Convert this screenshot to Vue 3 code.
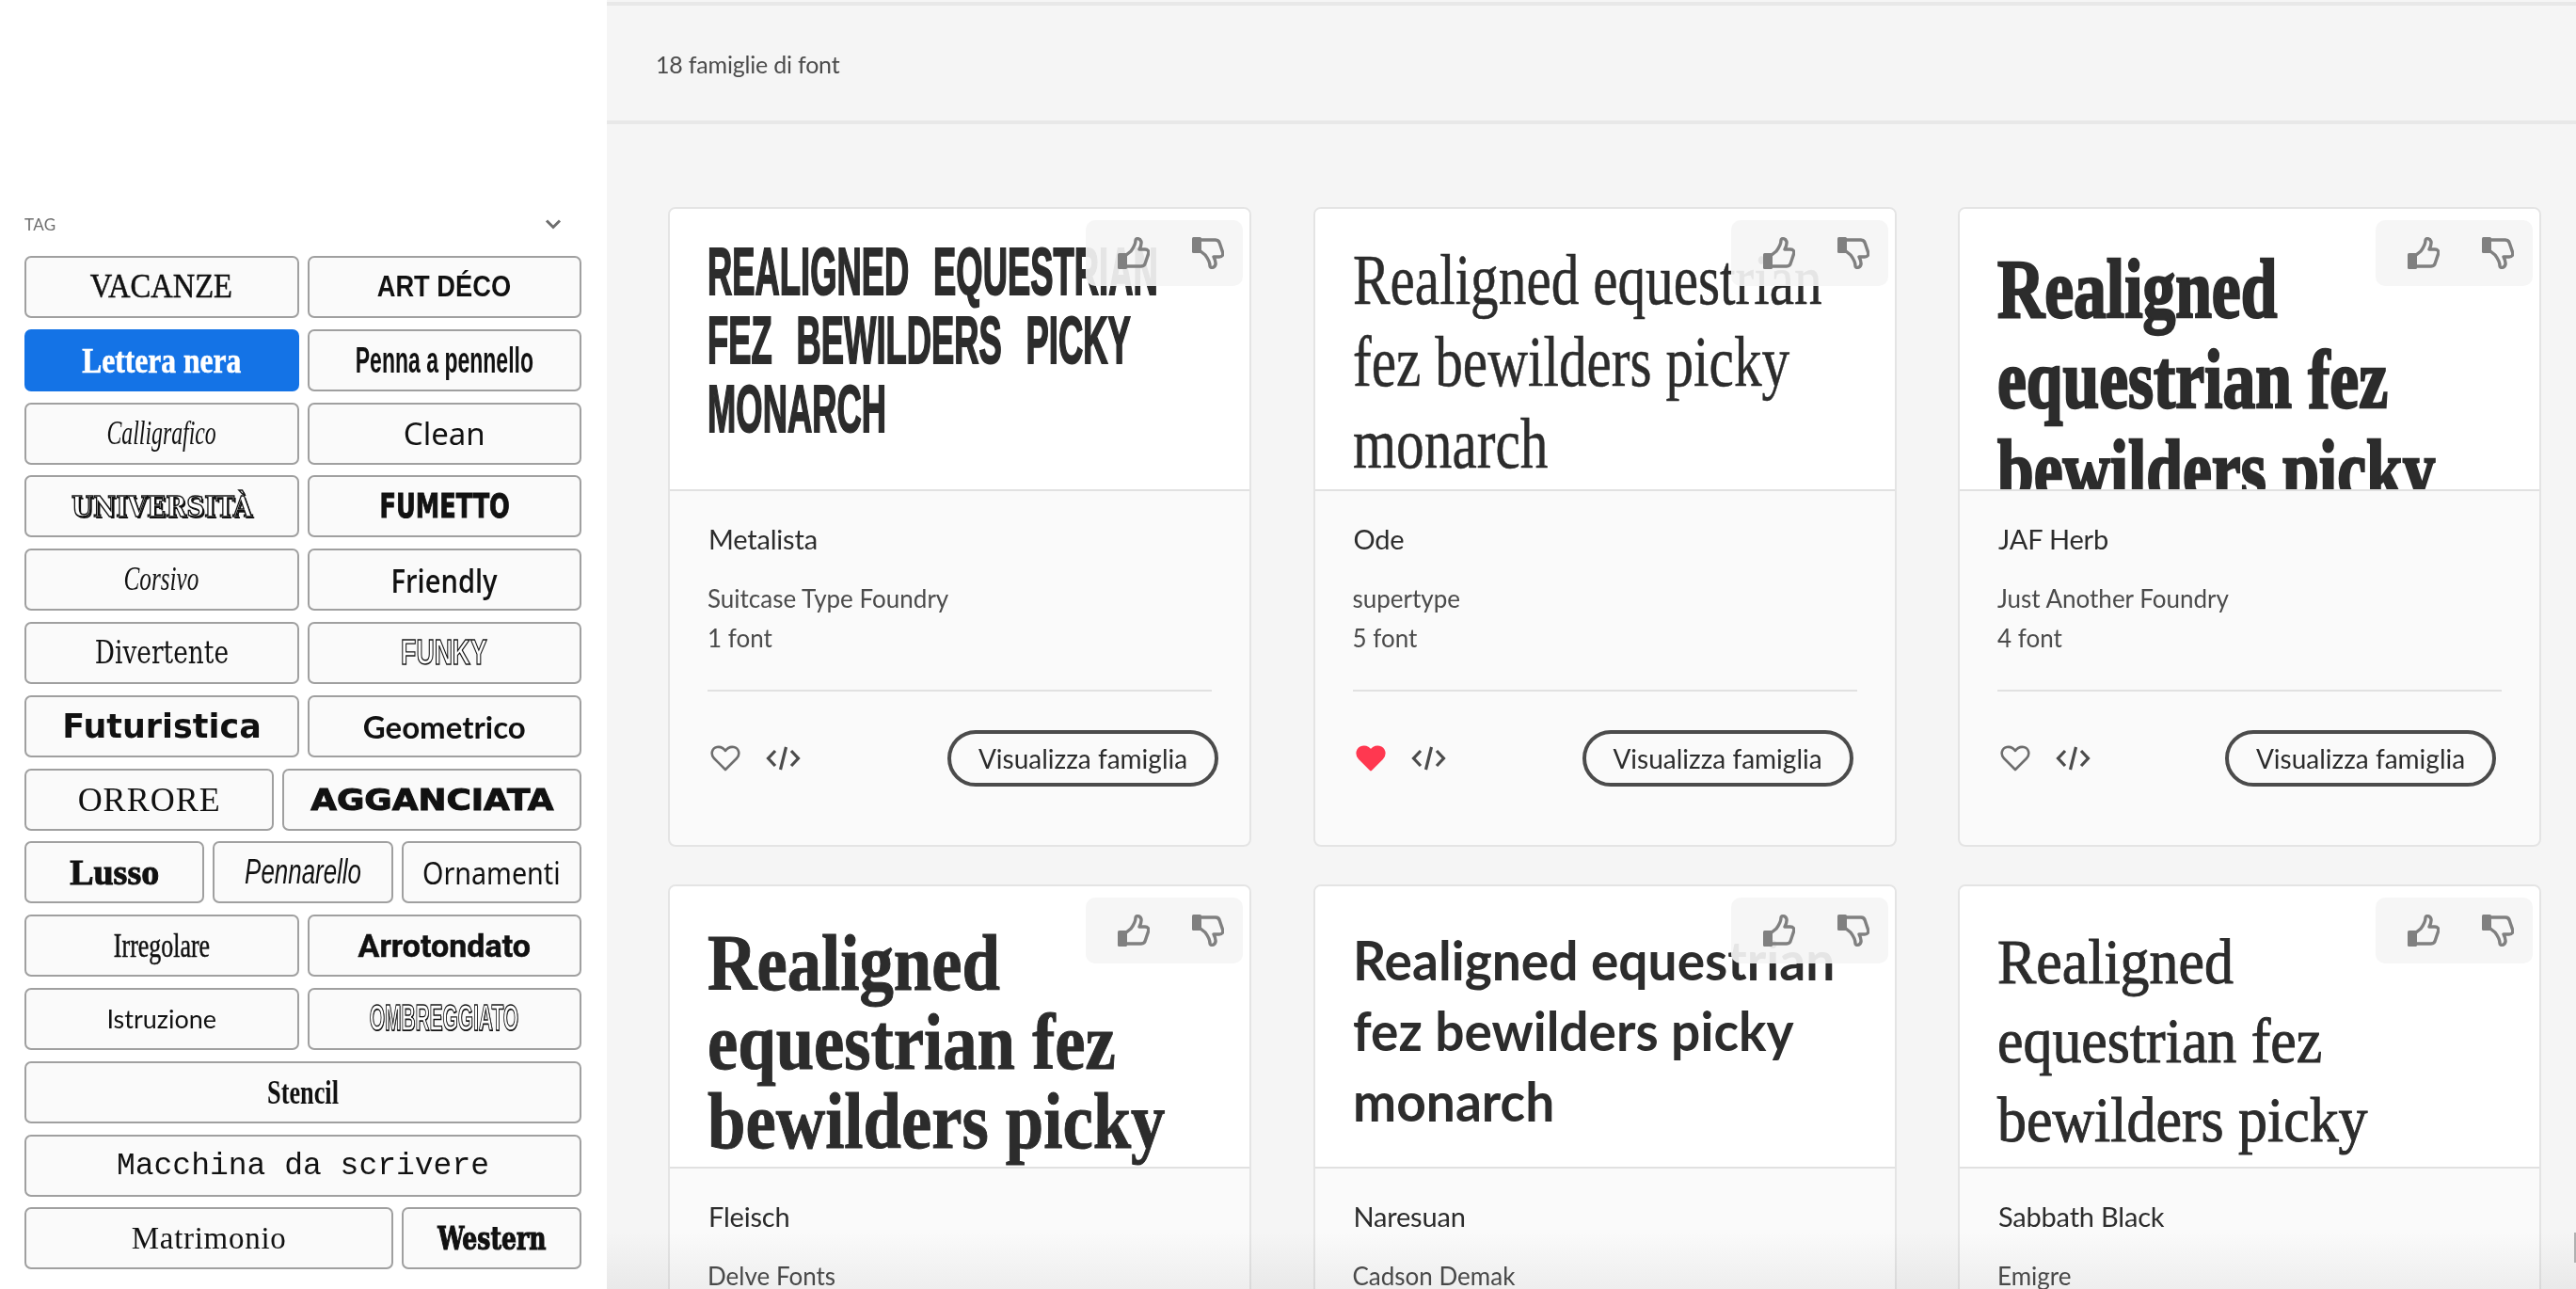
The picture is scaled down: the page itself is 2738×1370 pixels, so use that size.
<script setup>
const tagRows = [
  [{ label: 'VACANZE', cls: 'f-vacanze' }, { label: 'ART DÉCO', cls: 'f-deco' }],
  [{ label: 'Lettera nera', cls: 'f-lettera', active: true }, { label: 'Penna a pennello', cls: 'f-penna' }],
  [{ label: 'Calligrafico', cls: 'f-calli' }, { label: 'Clean', cls: 'f-clean' }],
  [{ label: 'UNIVERSITÀ', cls: 'f-uni' }, { label: 'FUMETTO', cls: 'f-fumetto' }],
  [{ label: 'Corsivo', cls: 'f-corsivo' }, { label: 'Friendly', cls: 'f-friendly' }],
  [{ label: 'Divertente', cls: 'f-divert' }, { label: 'FUNKY', cls: 'f-funky' }],
  [{ label: 'Futuristica', cls: 'f-futur' }, { label: 'Geometrico', cls: 'f-geo' }],
  [{ label: 'ORRORE', cls: 'f-orrore', w: 264 }, { label: 'AGGANCIATA', cls: 'f-agg', w: 317 }],
  [{ label: 'Lusso', cls: 'f-lusso' }, { label: 'Pennarello', cls: 'f-pennar' }, { label: 'Ornamenti', cls: 'f-orna' }],
  [{ label: 'Irregolare', cls: 'f-irreg' }, { label: 'Arrotondato', cls: 'f-arro' }],
  [{ label: 'Istruzione', cls: 'f-istr' }, { label: 'OMBREGGIATO', cls: 'f-ombre' }],
  [{ label: 'Stencil', cls: 'f-stencil' }],
  [{ label: 'Macchina da scrivere', cls: 'f-macchina' }],
  [{ label: 'Matrimonio', cls: 'f-matri', w: 393 }, { label: 'Western', cls: 'f-western', w: 189 }],
]

const families = [
  { name: 'Metalista', foundry: 'Suitcase Type Foundry', count: '1 font', cls: 'p-metalista', lines: ['Realigned equestrian', 'fez bewilders picky', 'monarch'] },
  { name: 'Ode', foundry: 'supertype', count: '5 font', cls: 'p-ode', liked: true, lines: ['Realigned equestrian', 'fez bewilders picky', 'monarch'] },
  { name: 'JAF Herb', foundry: 'Just Another Foundry', count: '4 font', cls: 'p-herb', lines: ['Realigned', 'equestrian fez', 'bewilders picky'] },
  { name: 'Fleisch', foundry: 'Delve Fonts', count: '2 font', cls: 'p-fleisch', lines: ['Realigned', 'equestrian fez', 'bewilders picky'] },
  { name: 'Naresuan', foundry: 'Cadson Demak', count: '1 font', cls: 'p-naresuan', lines: ['Realigned equestrian', 'fez bewilders picky', 'monarch'] },
  { name: 'Sabbath Black', foundry: 'Emigre', count: '1 font', cls: 'p-sabbath', lines: ['Realigned', 'equestrian fez', 'bewilders picky'] },
]
</script>

<template>
  <div class="page">
    <aside class="sidebar">
      <div class="tag-head">
        <span>TAG</span>
        <svg class="chevron" viewBox="0 0 18 12" width="18" height="12">
          <path d="M2 2.5 L9 9.5 L16 2.5" fill="none" stroke="#6e6e6e" stroke-width="3" />
        </svg>
      </div>
      <div class="tag-list">
        <div v-for="(row, i) in tagRows" :key="i" class="tag-row">
          <button
            v-for="tag in row"
            :key="tag.label"
            class="tag"
            :class="{ active: tag.active }"
            :style="{ flexGrow: tag.w ?? 1 }"
          >
            <span :class="tag.cls">{{ tag.label }}</span>
          </button>
        </div>
      </div>
    </aside>

    <main class="main">
      <header class="result-bar">18 famiglie di font</header>

      <section class="grid">
        <article v-for="family in families" :key="family.name" class="card">
          <div class="preview" :class="family.cls">
            <div v-for="line in family.lines" :key="line" class="line">{{ line }}</div>
            <div class="votes">
              <svg viewBox="0 0 34 34" width="34" height="34">
                <rect x="0" y="17" width="10" height="17" rx="1.5" fill="#808080" />
                <path d="M9 19 L14 15 C17 11 19 7 19 3.5 C19 0.5 24 1 25 5 C25.500 8 24 11 23 13 L29 13 C32 13 33.500 15 32.500 18 L29.500 27 C29 29.500 27.500 31 25 31 L9 31" fill="none" stroke="#808080" stroke-width="3.4" stroke-linejoin="round" />
              </svg>
              <svg viewBox="0 0 34 34" width="34" height="34">
                <g transform="translate(0 34) scale(1 -1)">
                  <rect x="0" y="17" width="10" height="17" rx="1.5" fill="#808080" />
                  <path d="M9 19 L14 15 C17 11 19 7 19 3.5 C19 0.5 24 1 25 5 C25.500 8 24 11 23 13 L29 13 C32 13 33.500 15 32.500 18 L29.500 27 C29 29.500 27.500 31 25 31 L9 31" fill="none" stroke="#808080" stroke-width="3.4" stroke-linejoin="round" />
                </g>
              </svg>
            </div>
          </div>
          <div class="info">
            <div class="name">{{ family.name }}</div>
            <div class="foundry">{{ family.foundry }}</div>
            <div class="foundry">{{ family.count }}</div>
            <div class="rule"></div>
            <div class="actions">
              <svg class="heart" viewBox="0 0 32 28" width="32" height="28">
                <path
                  d="M16 26 L4 14 C0 10 1.500 3 7 2 C10.500 1.400 14 3 16 6 C18 3 21.500 1.400 25 2 C30.500 3 32 10 28 14 Z"
                  :fill="family.liked ? '#ff3850' : 'none'"
                  :stroke="family.liked ? '#ff3850' : '#6e6e6e'"
                  stroke-width="2.6"
                  stroke-linejoin="round"
                />
              </svg>
              <svg class="code" viewBox="0 0 37 26" width="37" height="26">
                <path d="M10 5 L2.500 13 L10 21 M27 5 L34.500 13 L27 21 M21.500 1 L15.500 25" fill="none" stroke="#4b4b4b" stroke-width="3.2" />
              </svg>
              <button class="view">Visualizza famiglia</button>
            </div>
          </div>
        </article>
      </section>

      <div class="fade"></div>
      <div class="scroll-mark"></div>
    </main>
  </div>
</template>

<style>
html, body { overflow: hidden; background: #fff; }
</style>

<style scoped>
.page {
  display: flex;
  width: 2738px;
  height: 1370px;
  overflow: hidden;
  font-family: Lato, "Open Sans", sans-serif;
}
.sidebar {
  width: 645px;
  flex: none;
  background: #fff;
  box-sizing: border-box;
  padding: 226px 27px 0 26px;
}
.tag-head {
  display: flex;
  justify-content: space-between;
  align-items: center;
  height: 24px;
  padding-right: 21px;
  color: #6e6e6e;
  font-size: 17px;
  letter-spacing: 0.02em;
}
.tag-list {
  display: grid;
  gap: 11.8px;
  margin-top: 22px;
}
.tag-row { display: flex; gap: 9px; }
.tag {
  flex: 1 1 0;
  min-width: 0;
  height: 66px;
  padding: 0;
  box-sizing: border-box;
  display: flex;
  align-items: center;
  justify-content: center;
  background: #fafafa;
  border: 2px solid #a0a0a0;
  border-radius: 7px;
  color: #111;
  white-space: nowrap;
  overflow: hidden;
}
.tag.active { background: #1473e6; border-color: #1473e6; color: #fff; }
.tag span { display: inline-block; }

.f-vacanze { font: 400 35px "Liberation Serif", serif; -webkit-text-stroke: 0.5px #111; transform: scaleX(0.93); }
.f-deco { font: 700 31px "Liberation Sans", sans-serif; transform: scaleX(0.88); }
.f-lettera { font: 700 38px "Liberation Serif", serif; transform: scaleX(0.83); -webkit-text-stroke: 0.6px #fff; }
.f-penna { font: 700 39px "Liberation Sans", sans-serif; transform: scaleX(0.59); }
.f-calli { font: italic 400 35px "Liberation Serif", serif; transform: scaleX(0.68); }
.f-clean { font: 400 33px "Noto Sans", sans-serif; }
.f-uni { font: 700 30px "DejaVu Serif", serif; color: #fff; -webkit-text-stroke: 1.5px #111; text-shadow: 2px 2px 0 #111; transform: scaleX(0.88); }
.f-fumetto { font: 700 35px "DejaVu Sans", sans-serif; -webkit-text-stroke: 1px #111; transform: scaleX(0.73); }
.f-corsivo { font: italic 400 35px "Liberation Serif", serif; transform: scaleX(0.72); }
.f-friendly { font: 600 35px "Open Sans", sans-serif; transform: scaleX(0.83); }
.f-divert { font: 400 33px "DejaVu Serif", serif; transform: scaleX(0.8); }
.f-funky { font: 700 36px "Liberation Sans", sans-serif; color: #fff; -webkit-text-stroke: 1.4px #111; transform: scaleX(0.74); }
.f-futur { font: 700 36px "DejaVu Sans", sans-serif; transform: scaleX(0.97); }
.f-geo { font: 700 33px Lato, sans-serif; }
.f-orrore { font: 400 36px "Liberation Serif", serif; letter-spacing: 1px; }
.f-agg { font: 700 32px "DejaVu Sans", sans-serif; -webkit-text-stroke: 1px #111; transform: scaleX(1.12); }
.f-lusso { font: 700 38px "Liberation Serif", serif; -webkit-text-stroke: 1px #111; }
.f-pennar { font: italic 400 36px "Liberation Sans", sans-serif; transform: scaleX(0.72); }
.f-orna { font: 400 33px "Noto Sans", sans-serif; transform: scaleX(0.87); }
.f-irreg { font: 400 36px "Liberation Serif", serif; -webkit-text-stroke: 0.5px #111; transform: scaleX(0.72); }
.f-arro { font: 700 34px Roboto, sans-serif; -webkit-text-stroke: 0.5px #111; }
.f-istr { font: 400 27px Lato, sans-serif; }
.f-ombre { font: 700 38px "Liberation Sans", sans-serif; color: #fff; -webkit-text-stroke: 1.4px #111; text-shadow: 1px 1px 0 #111; transform: scaleX(0.55); }
.f-stencil { font: 700 36px "Liberation Serif", serif; transform: scaleX(0.73); }
.f-macchina { font: 400 33px "Liberation Mono", monospace; position: relative; top: 1px; }
.f-matri { font: 400 33px "Liberation Serif", serif; letter-spacing: 0.7px; }
.f-western { font: 700 33px "DejaVu Serif", serif; -webkit-text-stroke: 1.2px #111; transform: scaleX(0.76); }

.main {
  position: relative;
  flex: 1;
  min-width: 0;
  background: #f5f5f5;
  padding-top: 2px;
  box-sizing: border-box;
}
.result-bar {
  box-sizing: border-box;
  height: 130px;
  padding: 45px 0 0 52px;
  border-top: 4px solid #e8e8e8;
  border-bottom: 4px solid #e8e8e8;
  font-size: 25px;
  letter-spacing: -0.2px;
  line-height: 34px;
  color: #4b4b4b;
}
.grid {
  display: grid;
  grid-template-columns: repeat(3, 620px);
  column-gap: 65.5px;
  row-gap: 40px;
  margin: 88px 0 0 65px;
}
.card {
  height: 680px;
  box-sizing: border-box;
  border: 2px solid #e4e4e4;
  border-radius: 8px;
  background: #fafafa;
  overflow: hidden;
}
.preview {
  position: relative;
  height: 300px;
  box-sizing: border-box;
  padding-left: 40px;
  background: #fff;
  border-bottom: 2px solid #e1e1e1;
  overflow: hidden;
  color: #2c2c2c;
  white-space: nowrap;
}
.line { transform-origin: left center; }
.votes {
  position: absolute;
  top: 12px;
  right: 7px;
  width: 167px;
  height: 70px;
  box-sizing: border-box;
  padding: 0 20px 0 34px;
  display: flex;
  justify-content: space-between;
  align-items: center;
  border-radius: 10px;
  background: rgba(245, 245, 245, 0.92);
}
.p-metalista { padding-top: 31px; font: 700 70px/73px "Liberation Sans", sans-serif; word-spacing: 30px; }
.p-metalista .line { text-transform: uppercase; transform: scaleX(0.52); -webkit-text-stroke: 2px #2c2c2c; }
.p-ode { padding-top: 32px; font: 400 76px/87px "Liberation Serif", serif; }
.p-ode .line { transform: scaleX(0.78); -webkit-text-stroke: 0.5px #2c2c2c; }
.p-herb { padding-top: 38px; font: 700 88px/96px "Liberation Serif", serif; }
.p-herb .line { transform: scaleX(0.79); -webkit-text-stroke: 2.5px #2c2c2c; }
.p-fleisch { padding-top: 40px; font: 700 84px/84px "Liberation Serif", serif; }
.p-fleisch .line { transform: scaleX(0.865); -webkit-text-stroke: 1px #2c2c2c; }
.p-naresuan { padding-top: 40px; font: 700 58px/75px Lato, sans-serif; }
.p-naresuan .line { transform: scaleX(0.95); }
.p-sabbath { padding-top: 38px; font: 400 68px/84px "Liberation Serif", serif; }
.p-sabbath .line { transform: scaleX(0.91); -webkit-text-stroke: 1px #2c2c2c; }

.info { padding: 34px 40px 0; }
.name {
  font-size: 29px;
  line-height: 34px;
  letter-spacing: -0.2px;
  color: #2c2c2c;
  margin-bottom: 25px;
  padding-left: 1px;
}
.foundry {
  font-size: 26px;
  line-height: 42px;
  color: #4b4b4b;
}
.rule {
  height: 2px;
  background: #e1e1e1;
  margin: 34px 0 41px;
}
.actions { display: flex; align-items: center; }
.heart { margin-left: 3px; flex: none; }
.code { margin-left: 27px; flex: none; }
.view {
  margin-left: auto;
  width: 288px;
  height: 60px;
  flex: none;
  padding: 0;
  border: 4px solid #4b4b4b;
  border-radius: 30px;
  background: transparent;
  font: 400 28px Lato, sans-serif;
  color: #2c2c2c;
}
.card:nth-child(1) .view { margin-right: -7px; }
.card:nth-child(2) .view { margin-right: 4px; }
.card:nth-child(3) .view { margin-right: 6px; }

.fade {
  position: absolute;
  left: 0;
  right: 0;
  bottom: 0;
  height: 60px;
  background: linear-gradient(#fff, #f3f3f3);
  mix-blend-mode: multiply;
  pointer-events: none;
}
.scroll-mark {
  position: absolute;
  right: 0;
  top: 1310px;
  width: 2px;
  height: 32px;
  background: #b0b0b0;
}
</style>
